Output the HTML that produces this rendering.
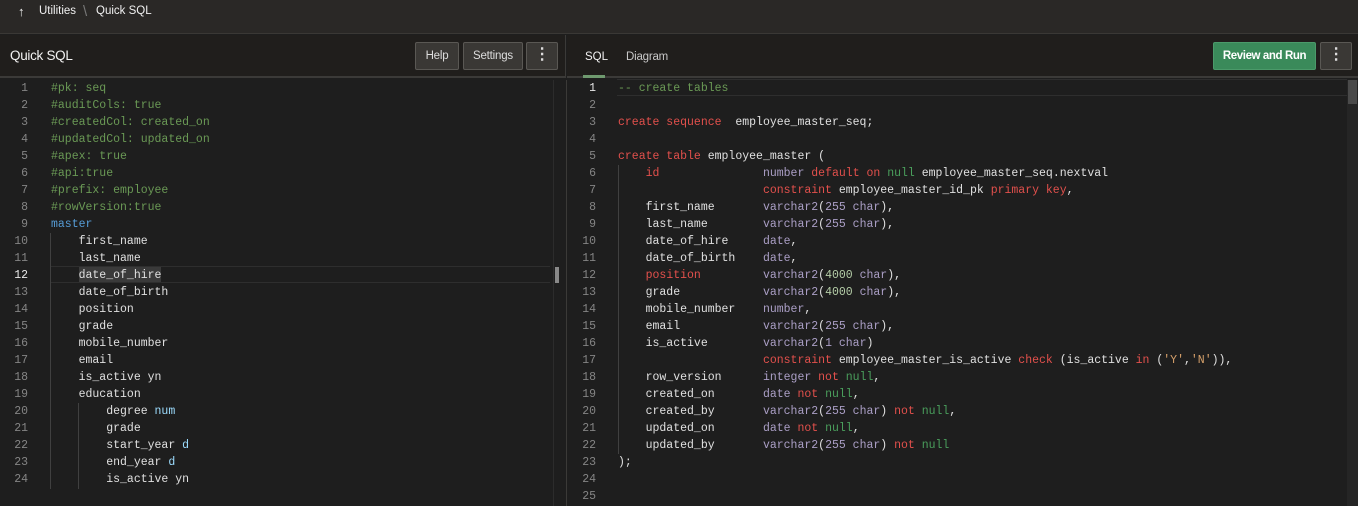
<!DOCTYPE html>
<html><head><meta charset="utf-8"><style>
*{margin:0;padding:0;box-sizing:border-box}
body{width:1358px;height:506px;overflow:hidden;background:#1e1e1e;font-family:"Liberation Sans",sans-serif;position:relative}
.top{position:absolute;left:0;top:0;width:1358px;height:34px;background:#2a2826;border-bottom:1px solid #3a3835}
.top span{position:absolute;top:5px;font-size:11.5px;color:#f0f0f0}
.hdr{position:absolute;top:35px;height:43px;background:#201e1c;border-bottom:2px solid #3b3a38}
.btn{position:absolute;top:42px;height:28px;border:1px solid #5a5854;background:#3a3835;color:#ddd;font-size:11.5px;line-height:26px;text-align:center;border-radius:2px;letter-spacing:-0.2px}
.dots{font-weight:bold;font-size:16px;line-height:24px}
pre{position:absolute;font-family:"Liberation Mono",monospace;font-size:11.5px;line-height:17px;color:#e0e0e0}
.ln{color:#858585;text-align:right}
.c{color:#6a9955}.b{color:#569cd6}.lb{color:#9cdcfe}
.k{color:#e2504c}.t{color:#ab9fc6}.n{color:#4a9e5c}.num{color:#b5cea8}.s{color:#d6a06a}
</style></head><body>
<div class="top">
<span style="left:18px;font-size:13px;top:4px">↑</span>
<span style="left:39px">Utilities</span>
<span style="left:83px;color:#777;font-size:15px;top:3px">\</span>
<span style="left:96px">Quick SQL</span>
</div>
<div class="hdr" style="left:0;width:566px;border-right:1px solid #3b3a38"></div>
<div class="hdr" style="left:567px;width:791px"></div>
<div style="position:absolute;left:10px;top:48px;font-size:13.5px;color:#f2f2f2;letter-spacing:-0.3px">Quick SQL</div>
<div class="btn" style="left:415px;width:44px">Help</div>
<div class="btn" style="left:463px;width:60px">Settings</div>
<div class="btn dots" style="left:526px;width:32px">⋮</div>
<div style="position:absolute;left:585px;top:51px;font-size:11.5px;color:#f2f2f2">SQL</div>
<div style="position:absolute;left:583px;top:75px;width:22px;height:3px;background:#6f9a6f"></div>
<div style="position:absolute;left:626px;top:51px;font-size:11.5px;color:#c8c8c8;letter-spacing:-0.2px">Diagram</div>
<div class="btn" style="left:1213px;width:103px;background:#3a8a5a;border-color:#4b9a6a;color:#fff;font-weight:bold;letter-spacing:-0.4px">Review and Run</div>
<div class="btn dots" style="left:1320px;width:32px;top:42px">⋮</div>
<div style="position:absolute;left:553px;top:80px;width:13px;height:426px;background:#1e1e1e;border-left:1px solid #2c2c2c"></div>
<div style="position:absolute;left:566px;top:80px;width:1px;height:426px;background:#3b3a38"></div>
<div style="position:absolute;left:555px;top:267px;width:4px;height:16px;background:#888"></div>
<div style="position:absolute;left:50px;top:266px;width:500px;height:17px;border-top:1px solid #2e2e2e;border-bottom:1px solid #2e2e2e"></div>
<div style="position:absolute;left:79px;top:267px;width:82px;height:15px;background:#3a3a3a"></div>
<div style="position:absolute;left:617px;top:79px;width:730px;height:17px;border-top:1px solid #2e2e2e;border-bottom:1px solid #2e2e2e"></div>
<div style="position:absolute;left:1347px;top:80px;width:11px;height:426px;background:#252525"></div>
<div style="position:absolute;left:1348px;top:80px;width:9px;height:24px;background:#4a4a4a"></div>
<div style="position:absolute;left:50px;top:233px;width:1px;height:256px;background:#404040"></div>
<div style="position:absolute;left:78px;top:403px;width:1px;height:86px;background:#404040"></div>
<div style="position:absolute;left:618px;top:165px;width:1px;height:289px;background:#404040"></div>
<pre class="ln" style="left:10px;top:80px;width:18px">1
2
3
4
5
6
7
8
9
10
11
<span style="color:#e8e8e8">12</span>
13
14
15
16
17
18
19
20
21
22
23
24</pre>
<pre style="left:51px;top:80px"><span class="c">#pk: seq
#auditCols: true
#createdCol: created_on
#updatedCol: updated_on
#apex: true
#api:true
#prefix: employee
#rowVersion:true</span>
<span class="b">master</span>
    first_name
    last_name
    date_of_hire
    date_of_birth
    position
    grade
    mobile_number
    email
    is_active yn
    education
        degree <span class="lb">num</span>
        grade
        start_year <span class="lb">d</span>
        end_year <span class="lb">d</span>
        is_active yn</pre>
<pre class="ln" style="left:580px;top:80px;width:16px"><span style="color:#e8e8e8">1</span>
2
3
4
5
6
7
8
9
10
11
12
13
14
15
16
17
18
19
20
21
22
23
24
25</pre>
<pre style="left:618px;top:80px"><span class="c">-- create tables</span>

<span class="k">create sequence</span>  employee_master_seq;

<span class="k">create table</span> employee_master (
    <span class="k">id</span>               <span class="t">number</span> <span class="k">default on</span> <span class="n">null</span> employee_master_seq.nextval
                     <span class="k">constraint</span> employee_master_id_pk <span class="k">primary key</span>,
    first_name       <span class="t">varchar2</span>(<span class="t">255 char</span>),
    last_name        <span class="t">varchar2</span>(<span class="t">255 char</span>),
    date_of_hire     <span class="t">date</span>,
    date_of_birth    <span class="t">date</span>,
    <span class="k">position</span>         <span class="t">varchar2</span>(<span class="num">4000</span> <span class="t">char</span>),
    grade            <span class="t">varchar2</span>(<span class="num">4000</span> <span class="t">char</span>),
    mobile_number    <span class="t">number</span>,
    email            <span class="t">varchar2</span>(<span class="t">255 char</span>),
    is_active        <span class="t">varchar2</span>(<span class="t">1 char</span>)
                     <span class="k">constraint</span> employee_master_is_active <span class="k">check</span> (is_active <span class="k">in</span> (<span class="s">'Y'</span>,<span class="s">'N'</span>)),
    row_version      <span class="t">integer</span> <span class="k">not</span> <span class="n">null</span>,
    created_on       <span class="t">date</span> <span class="k">not</span> <span class="n">null</span>,
    created_by       <span class="t">varchar2</span>(<span class="t">255 char</span>) <span class="k">not</span> <span class="n">null</span>,
    updated_on       <span class="t">date</span> <span class="k">not</span> <span class="n">null</span>,
    updated_by       <span class="t">varchar2</span>(<span class="t">255 char</span>) <span class="k">not</span> <span class="n">null</span>
);</pre>
</body></html>
